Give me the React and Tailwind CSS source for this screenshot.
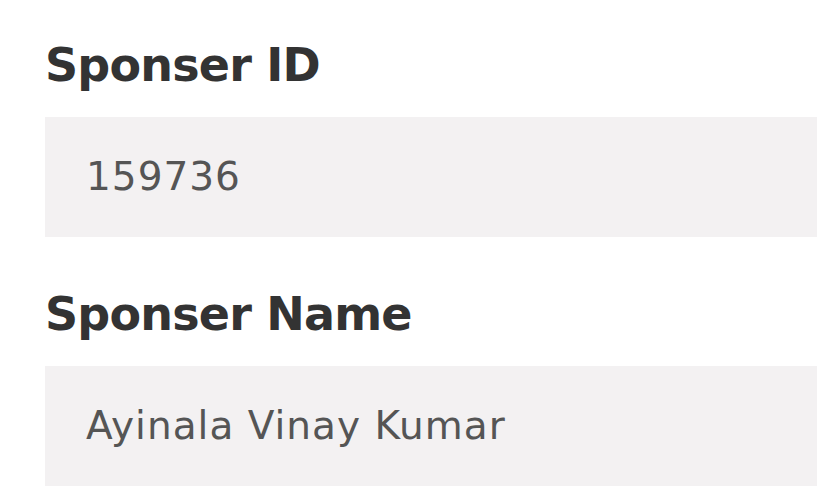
export default function App() {
  const fields = [
    { label: 'Sponser ID', value: '159736' },
    { label: 'Sponser Name', value: 'Ayinala Vinay Kumar' },
  ];

  return (
    <div className="min-h-screen bg-white pl-[45px] pt-[42px] font-['DejaVu_Sans',sans-serif]">
      {fields.map((f) => (
        <div key={f.label} className="mb-[54px]">
          <label className="block text-[46px] leading-none font-bold text-[#333333] tracking-[-0.8px]">
            {f.label}
          </label>
          <div className="mt-[29px] h-[120px] bg-[#f3f1f2] pl-[41px] flex items-center">
            <span className="text-[39px] text-[#555555] tracking-[1px]">{f.value}</span>
          </div>
        </div>
      ))}
    </div>
  );
}
